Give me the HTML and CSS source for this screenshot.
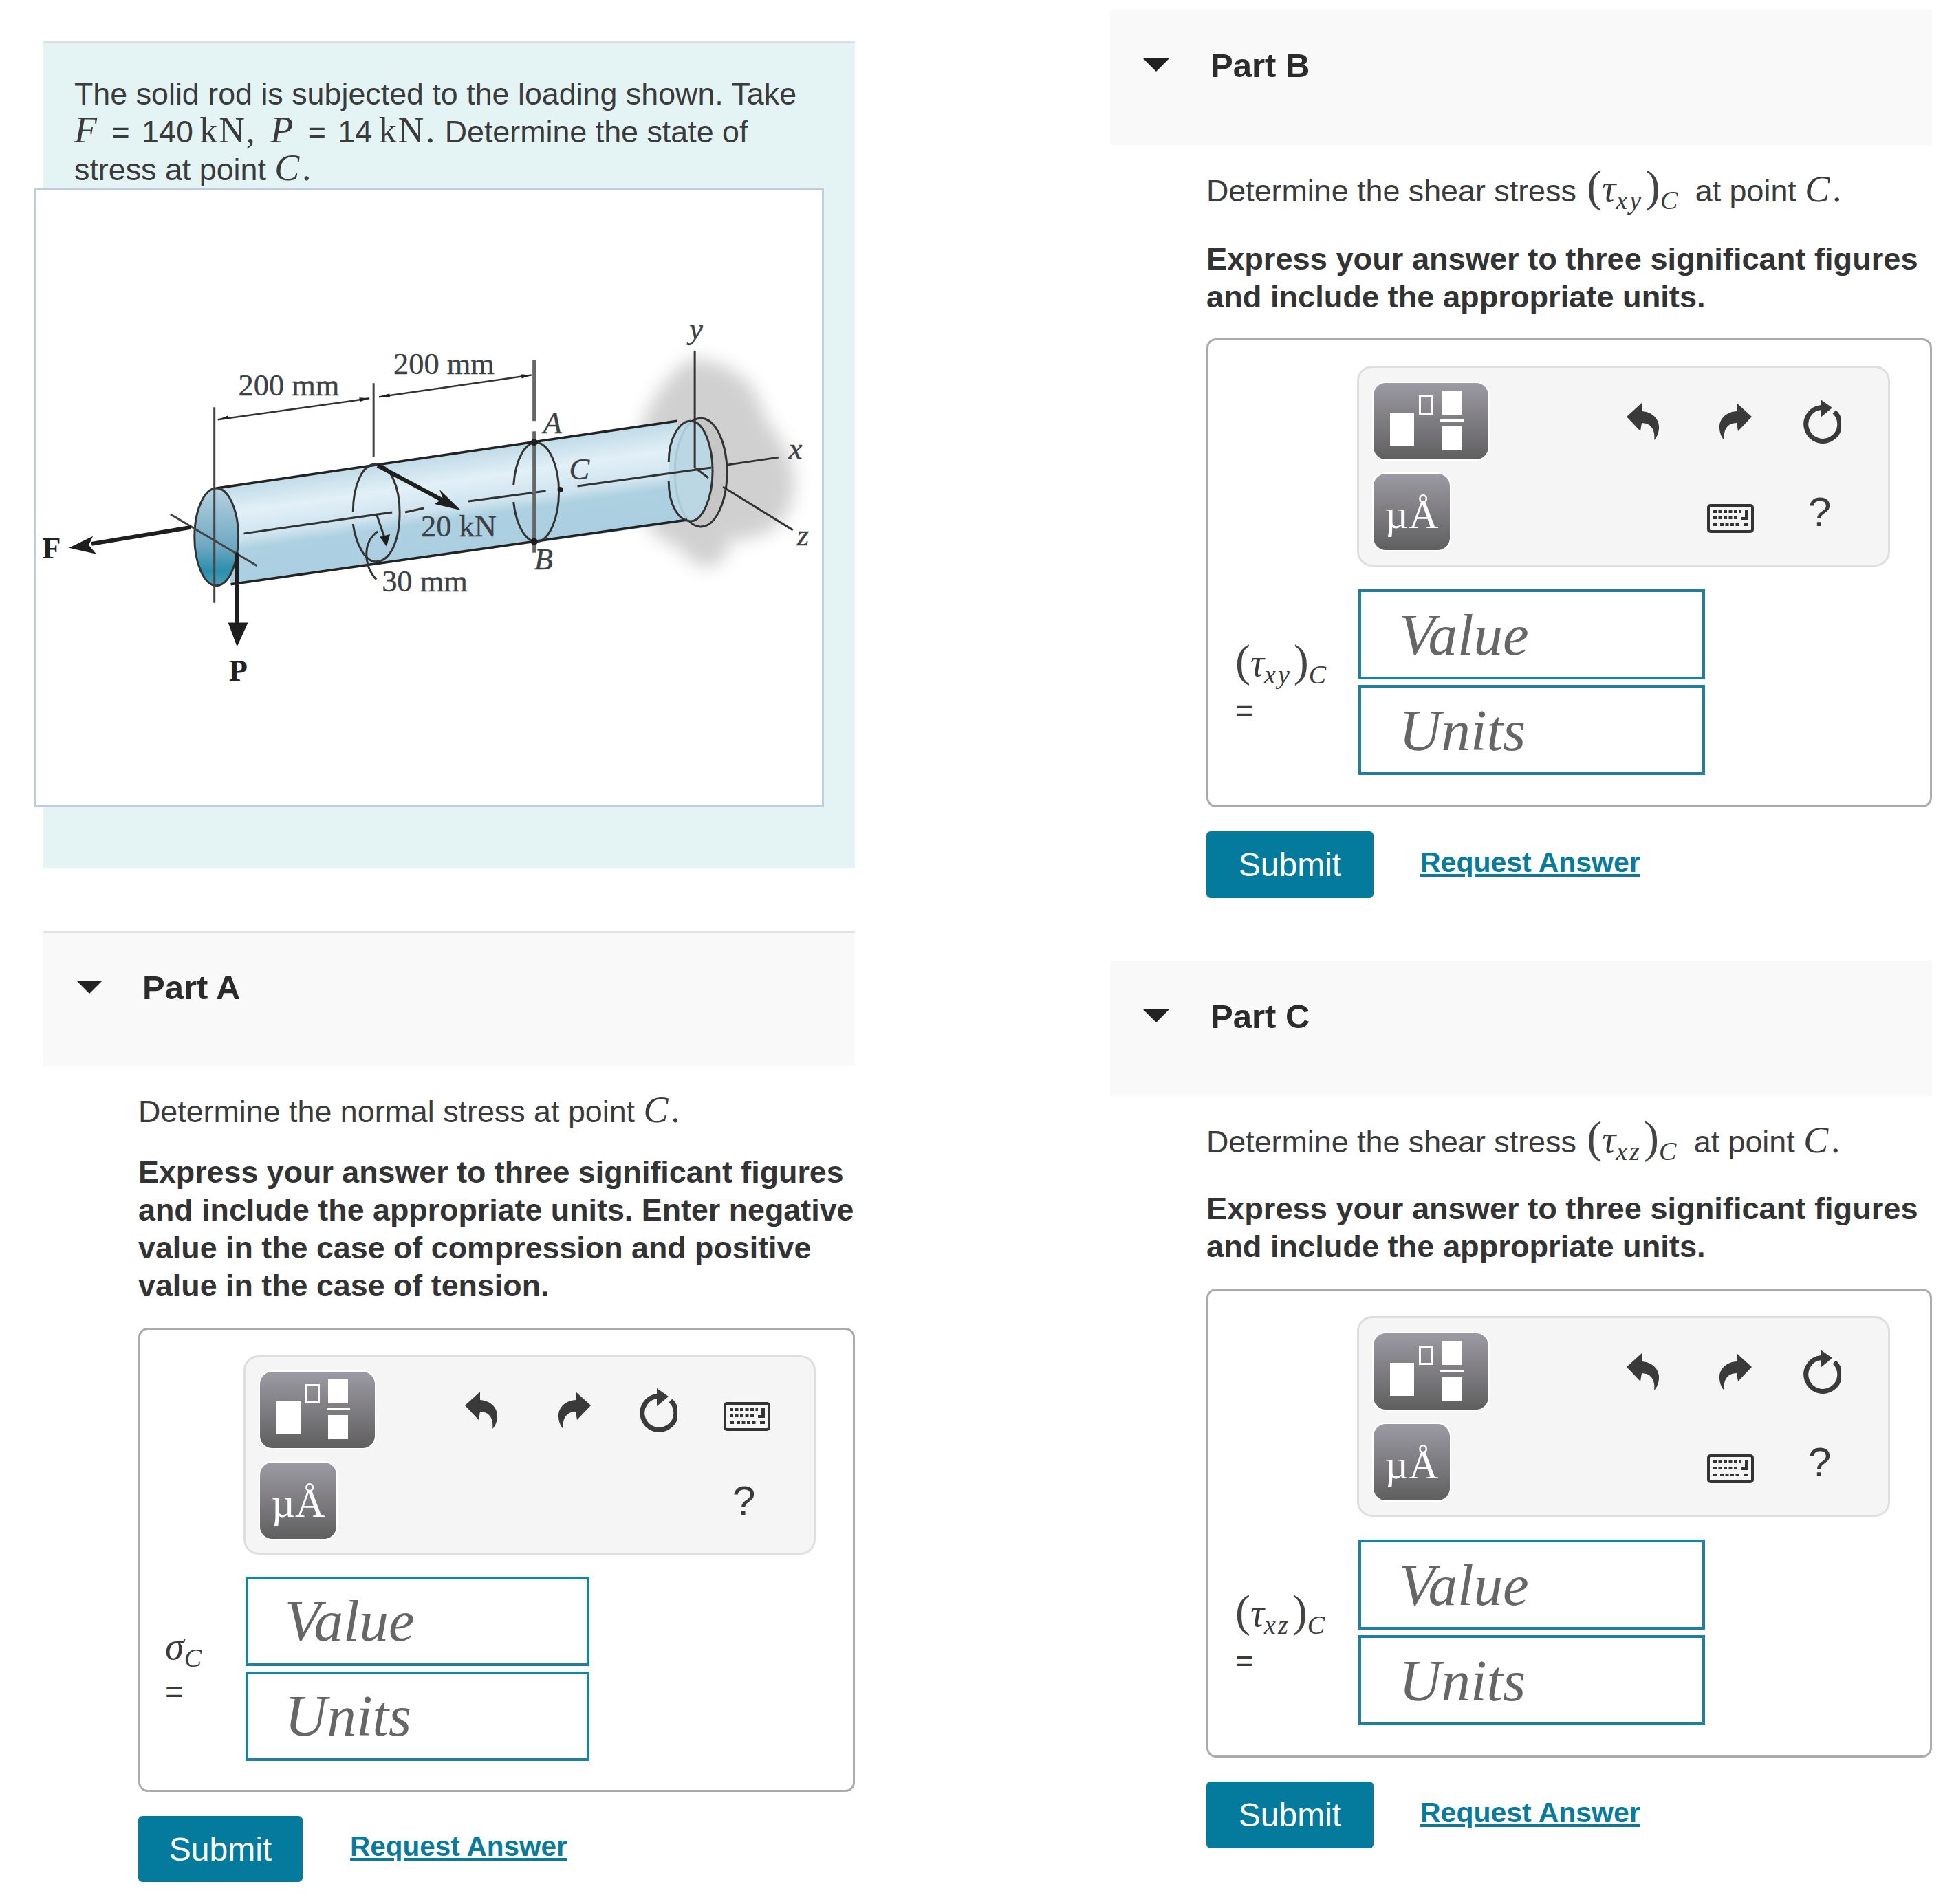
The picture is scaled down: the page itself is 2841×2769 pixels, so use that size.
FILE: index.html
```html
<!DOCTYPE html>
<html lang="en">
<head>
<meta charset="utf-8">
<title>Solid rod problem</title>
<link rel="stylesheet" href="styles.css">
</head>
<body>
<svg class="sprite" aria-hidden="true">
  <symbol id="i-undo" viewBox="0 0 47 54"><path d="M0 20 L22 0 L22 12 C38 13 48 24 47 37 C46.500 44 44 50 40 54 C42 40 36 29 22 29 L20 41 Z"/></symbol>
  <symbol id="i-reset" viewBox="0 0 56 64"><path class="ring" d="M46 18 A24.500 24.500 0 1 1 27 11.500"/><path d="M26 0 L43 12 L26 26 Z"/></symbol>
  <symbol id="i-kbd" viewBox="0 0 68 42">
    <rect class="kb-frame" x="2" y="2" width="64" height="38" rx="3"/>
    <path class="kb-keys" d="M9 11 H50 M9 20 H46 M19 30 H49"/>
    <path class="kb-solid" d="M55 9 H60 V23 H50 V19 H55 Z M9 28 H15 V32 H9 Z M53 28 H60 V32 H53 Z"/>
  </symbol>
  <symbol id="i-tmpl" viewBox="0 0 167 111">
    <rect class="w" x="24" y="43" width="35" height="48"/>
    <rect class="o" x="67.500" y="19.500" width="18" height="25"/>
    <rect class="w" x="99" y="11" width="29" height="35"/>
    <rect class="w" x="97" y="53" width="34" height="3"/>
    <rect class="w" x="99" y="63" width="29" height="35"/>
  </symbol>
</svg>

<main class="page">
  <section class="col col-left">
    <div class="intro">
      <p class="intro-text">The solid rod is subjected to the loading shown. Take <span class="m">F</span> <span class="rel">=</span> 140 <span class="mr kn">kN</span><span class="mr comma">,</span> <span class="m">P</span> <span class="rel">=</span> 14 <span class="mr kn">kN</span><span class="mr stop">.</span> Determine the state of stress at point <span class="m">C</span><span class="mr">.</span></p>
      <figure class="figure">
        <svg class="diagram" viewBox="52 275 1144 897" role="img" aria-label="Solid rod diagram">
          <defs>
            <linearGradient id="rod" gradientUnits="userSpaceOnUse" x1="640" y1="640" x2="665" y2="815">
              <stop offset="0" stop-color="#8fb9cd"/>
              <stop offset=".14" stop-color="#c2dce8"/>
              <stop offset=".35" stop-color="#e2f0f7"/>
              <stop offset=".56" stop-color="#cfe4ee"/>
              <stop offset=".66" stop-color="#aed1e2"/>
              <stop offset="1" stop-color="#a9cee0"/>
            </linearGradient>
            <linearGradient id="face" x1="0" y1="0" x2="0" y2="1">
              <stop offset="0" stop-color="#b5d2e0"/>
              <stop offset=".6" stop-color="#6ea8c2"/>
              <stop offset=".85" stop-color="#2a8eae"/>
              <stop offset="1" stop-color="#4e9cb8"/>
            </linearGradient>
            <filter id="soft" x="-30%" y="-30%" width="160%" height="160%"><feGaussianBlur stdDeviation="13"/></filter>
          </defs>
          <path class="blob" filter="url(#soft)" d="M1010 520 C1062 528 1095 550 1108 590 C1120 630 1156 650 1156 700 C1156 765 1112 785 1060 786 C1062 824 1025 836 1002 812 C985 785 940 790 936 740 C926 690 926 620 946 590 C965 555 990 528 1010 520 Z"/>
          <path class="rod" d="M314 710 L985 612 L1005 758 L335 851 Z"/>
          <ellipse class="rim" cx="1020" cy="687" rx="38" ry="79"/>
          <ellipse class="rod-end" cx="1005" cy="685" rx="32" ry="73"/>
          <path class="rodline" d="M314 710 L985 612 M335 850 L1000 756"/>
          <ellipse class="face" cx="314" cy="781" rx="32" ry="71"/>
          <path class="thin" d="M513 745 C513 705 527 675 546 675 C568 675 581 710 581 745 C581 785 568 817 546 817 C530 817 517 790 513 762"/>
          <path class="thin" d="M747 705 C750 665 765 643 780 643 C800 645 813 680 813 715 C813 755 798 788 780 788 C763 788 750 760 747 730"/>
          <path class="thin" d="M973 672 C973 635 990 612 1005 612 C1025 612 1037 650 1037 685 C1037 725 1022 758 1005 758 C988 758 973 735 973 700"/>
          <path class="axis" d="M354 776 L570 745 M589 745 L616 739 M681 729 L794 714 M840 707 L1035 680 M1058 676 L1133 665 M1011 510 V680 M1011 680 L1031 695 M1052 708 L1154 771"/>
          <path class="axis thin-axis" d="M247 748 L373 823 M311 592 V877 M543 557 V664"/>
          <path class="axis thick" d="M777 523 V612 M777 627 V804"/>
          <path class="dim" d="M316 610 L537 579 M551 577 L773 545"/>
          <path class="tip" d="M316 610 L331 604 L332 609 Z M537 579 L522 578 L523 584 Z M551 577 L566 572 L567 577 Z M773 545 L758 544 L759 550 Z"/>
          <path class="thin" d="M547 747 L562 791 M547 843 C530 825 525 790 549 773"/>
          <path class="tip" d="M562 795 L552 781 L567 777 Z"/>
          <path class="force" d="M277 767 L132 791 M343.500 804 V917 M549 677 L650 731"/>
          <path class="tip" d="M99 797 L134 780 L128 793 L139 806 Z M331 906 H360 L344 941 Z M670 742 L639 712 L644 725 L632 733 Z"/>
          <circle class="tip" cx="777" cy="643" r="5"/>
          <circle class="tip" cx="777" cy="788" r="5"/>
          <circle class="tip" cx="815" cy="712" r="4"/>
          <text class="lbl" x="346" y="575">200 mm</text>
          <text class="lbl" x="572" y="544">200 mm</text>
          <text class="lbl" x="612" y="780">20 kN</text>
          <text class="lbl" x="555" y="860">30 mm</text>
          <text class="lbl b" x="60" y="812">F</text>
          <text class="lbl b" x="332" y="991">P</text>
          <text class="lbl i" x="790" y="630">A</text>
          <text class="lbl i" x="777" y="828">B</text>
          <text class="lbl i" x="828" y="697">C</text>
          <text class="lbl i" x="1003" y="492">y</text>
          <text class="lbl i" x="1148" y="667">x</text>
          <text class="lbl i" x="1160" y="793">z</text>
        </svg>
      </figure>
    </div>

    <article class="part part-a">
      <header class="part-head"><span class="caret"></span><h2 class="part-title">Part A</h2></header>
      <div class="part-body">
        <p class="desc">Determine the normal stress at point <span class="m">C</span><span class="mr">.</span></p>
        <p class="instr">Express your answer to three significant figures and include the appropriate units. Enter negative value in the case of compression and positive value in the case of tension.</p>
        <div class="answer">
          <div class="toolbar">
            <div class="tb-row">
              <button class="tool tool-wide"><svg class="tmpl"><use href="#i-tmpl"/></svg></button>
              <svg class="ic ic-undo a1"><use href="#i-undo"/></svg>
              <svg class="ic ic-redo a2"><use href="#i-undo"/></svg>
              <svg class="ic ic-reset a3"><use href="#i-reset"/></svg>
              <svg class="ic ic-kbd a4"><use href="#i-kbd"/></svg>
            </div>
            <div class="tb-row">
              <button class="tool tool-unit">µÅ</button>
              <span class="help a5">?</span>
            </div>
          </div>
          <div class="entry">
            <div class="label"><span class="m sym">σ</span><sub class="m ssub">C</sub> <span class="eq">=</span></div>
            <div class="fields">
              <div class="field">Value</div>
              <div class="field">Units</div>
            </div>
          </div>
        </div>
        <div class="actions">
          <button class="submit">Submit</button>
          <a class="req" href="#">Request Answer</a>
        </div>
      </div>
    </article>
  </section>

  <section class="col col-right">
    <article class="part part-b">
      <header class="part-head"><span class="caret"></span><h2 class="part-title">Part B</h2></header>
      <div class="part-body">
        <p class="desc">Determine the shear stress <span class="paren">(</span><span class="m sym">τ</span><sub class="m ssub">xy</sub><span class="paren">)</span><sub class="m ssub">C</sub> <span class="after">at point</span> <span class="m">C</span><span class="mr">.</span></p>
        <p class="instr">Express your answer to three significant figures and include the appropriate units.</p>
        <div class="answer">
          <div class="toolbar">
            <div class="tb-row">
              <button class="tool tool-wide"><svg class="tmpl"><use href="#i-tmpl"/></svg></button>
              <svg class="ic ic-undo b1"><use href="#i-undo"/></svg>
              <svg class="ic ic-redo b2"><use href="#i-undo"/></svg>
              <svg class="ic ic-reset b3"><use href="#i-reset"/></svg>
            </div>
            <div class="tb-row">
              <button class="tool tool-unit">µÅ</button>
              <svg class="ic ic-kbd b4"><use href="#i-kbd"/></svg>
              <span class="help b5">?</span>
            </div>
          </div>
          <div class="entry">
            <div class="label"><span class="paren">(</span><span class="m sym">τ</span><sub class="m ssub">xy</sub><span class="paren">)</span><sub class="m ssub">C</sub> <span class="eq">=</span></div>
            <div class="fields">
              <div class="field">Value</div>
              <div class="field">Units</div>
            </div>
          </div>
        </div>
        <div class="actions">
          <button class="submit">Submit</button>
          <a class="req" href="#">Request Answer</a>
        </div>
      </div>
    </article>

    <article class="part part-c">
      <header class="part-head"><span class="caret"></span><h2 class="part-title">Part C</h2></header>
      <div class="part-body">
        <p class="desc">Determine the shear stress <span class="paren">(</span><span class="m sym">τ</span><sub class="m ssub">xz</sub><span class="paren">)</span><sub class="m ssub">C</sub> <span class="after">at point</span> <span class="m">C</span><span class="mr">.</span></p>
        <p class="instr">Express your answer to three significant figures and include the appropriate units.</p>
        <div class="answer">
          <div class="toolbar">
            <div class="tb-row">
              <button class="tool tool-wide"><svg class="tmpl"><use href="#i-tmpl"/></svg></button>
              <svg class="ic ic-undo b1"><use href="#i-undo"/></svg>
              <svg class="ic ic-redo b2"><use href="#i-undo"/></svg>
              <svg class="ic ic-reset b3"><use href="#i-reset"/></svg>
            </div>
            <div class="tb-row">
              <button class="tool tool-unit">µÅ</button>
              <svg class="ic ic-kbd b4"><use href="#i-kbd"/></svg>
              <span class="help b5">?</span>
            </div>
          </div>
          <div class="entry">
            <div class="label"><span class="paren">(</span><span class="m sym">τ</span><sub class="m ssub">xz</sub><span class="paren">)</span><sub class="m ssub">C</sub> <span class="eq">=</span></div>
            <div class="fields">
              <div class="field">Value</div>
              <div class="field">Units</div>
            </div>
          </div>
        </div>
        <div class="actions">
          <button class="submit">Submit</button>
          <a class="req" href="#">Request Answer</a>
        </div>
      </div>
    </article>
  </section>
</main>
</body>
</html>
```
FILE: styles.css
```css
* { box-sizing: border-box; }
html, body { margin: 0; padding: 0; background: #fff; }
body { font-family: "Liberation Sans", Arial, sans-serif; color: #3b3b3b; width: 2841px; height: 2769px; overflow: hidden; }
p, h2, figure { margin: 0; }
.sprite { display: none; }
.page { display: flex; align-items: flex-start; }
.col-left { width: 1180px; margin-left: 63px; padding-top: 60px; }
.col-right { width: 1195px; margin-left: 371px; padding-top: 14px; }

.intro { background: #e4f4f5; border-top: 3px solid #dcdfe1; height: 1203px; padding-top: 46px; }
.intro-text { font-size: 44.800px; line-height: 55px; padding-left: 45px; padding-right: 50px; height: 164px; }
.figure { width: 1148px; height: 901px; margin-left: -13px; background: #fff; border: 3px solid #bccde0; }
.diagram { display: block; width: 100%; height: 100%; }

.m { font-family: "Liberation Serif", serif; font-style: italic; font-size: 54px; line-height: 0; padding-right: 4px; }
.mr { font-family: "Liberation Serif", serif; font-size: 52px; line-height: 0; letter-spacing: 2px; }
.kn { margin-left: -3px; }
.rel { margin: 0 5px; }
.comma { margin-right: 8px; }
.stop { margin-left: 1px; }
.sym { font-size: 56px; padding-right: 0; }
.ssub { font-size: 38px; line-height: 0; vertical-align: -11px; letter-spacing: 3px; padding-right: 0; }
.paren { font-family: "Liberation Serif", serif; font-size: 66px; font-weight: 400; line-height: 0; color: #444; margin-left: 3px; }
.label .paren:first-child { margin-left: 0; }
.after { margin-left: 10px; }

.part { margin-top: 91px; }
.part-b { margin-top: 0; }
.part-head { display: flex; align-items: flex-start; height: 197px; background: #f9f9f9; padding: 53px 0 0 48px; }
.part-a .part-head { border-top: 3px solid #e2e2e2; padding-top: 51px; }
.caret { width: 0; height: 0; margin-top: 18px; border-left: 19px solid transparent; border-right: 19px solid transparent; border-top: 19px solid #222; }
.part-title { margin-left: 60px; font-size: 49px; line-height: 56px; font-weight: 700; color: #2b2b2b; }
.part-a .part-title { margin-left: 58px; }
.part-body { padding-left: 138px; }
.part-b .part-body, .part-c .part-body { padding-left: 140px; }

.desc { font-size: 44.800px; line-height: 55px; padding-top: 38px; }
.part-b .desc, .part-c .desc { padding-top: 33px; line-height: 66px; }
.instr { font-size: 45.200px; line-height: 55px; font-weight: 700; margin-top: 33px; color: #333; }
.part-a .instr { margin-right: -10px; font-size: 44.800px; }
.part-b .instr { margin-top: 39px; }
.part-c .instr { margin-top: 37px; }

.answer { border: 3px solid #ababab; border-radius: 14px; margin-top: 33px; padding-top: 37px; padding-bottom: 44px; }
.part-a .answer { margin-top: 34px; padding-bottom: 42px; }
.part-c .answer { margin-top: 34px; }
.toolbar { background: #f5f5f5; border: 3px solid #dedede; border-radius: 22px; padding: 22px 0 21px 21px; display: flex; flex-direction: column; gap: 21px; }
.part-a .toolbar { width: 832px; height: 290px; margin-left: 150px; padding-top: 21px; }
.part-b .toolbar, .part-c .toolbar { width: 775px; height: 292px; margin-left: 216px; }
.tb-row { display: flex; align-items: center; height: 111px; }

.tool { border: 0; padding: 0; margin: 0; border-radius: 18px; background: linear-gradient(#9c9aa3, #605f5f); box-shadow: 0 0 0 2px #fff; color: #fff; display: block; }
.tool-wide { width: 167px; height: 111px; }
.tool-unit { width: 111px; height: 111px; font-family: "Liberation Serif", serif; font-size: 60px; line-height: 111px; padding-top: 4px; }
.tmpl { display: block; width: 167px; height: 111px; }
#i-tmpl .w { fill: #fff; }
#i-tmpl .o { fill: none; stroke: #fff; stroke-width: 3px; }

.ic { display: block; flex: none; fill: #3a3a3a; }
.ic-undo { width: 47px; height: 54px; }
.ic-redo { width: 47px; height: 54px; transform: scaleX(-1); }
.ic-reset { width: 56px; height: 64px; }
.ic-kbd { width: 68px; height: 42px; margin-top: 18px; }
#i-reset .ring { fill: none; stroke: #3a3a3a; stroke-width: 7px; }
#i-kbd .kb-frame { fill: #f5f5f5; stroke: #333; stroke-width: 4px; }
#i-kbd .kb-keys { fill: none; stroke: #333; stroke-width: 4px; stroke-dasharray: 5 2.500; }
#i-kbd .kb-solid { fill: #333; }
.help { font-size: 60px; line-height: 60px; color: #3a3a3a; flex: none; }

.a1 { margin-left: 131px; }
.a2 { margin-left: 89px; }
.a3 { margin-left: 70px; }
.a4 { margin-left: 67px; }
.a5 { margin-left: 576px; }
.b1 { margin-left: 201px; }
.b2 { margin-left: 88px; }
.b3 { margin-left: 74px; }
.b4 { margin-left: 374px; }
.b5 { margin-left: 79px; }

.entry { display: flex; align-items: center; margin-top: 32px; padding-left: 36px; }
.part-a .label { width: 117px; }
.part-b .label, .part-c .label { width: 179px; padding-top: 13px; }
.part-b .entry, .part-c .entry { margin-top: 33px; padding-left: 39px; }
.label { font-size: 45px; line-height: 55px; }
.eq { display: block; font-size: 45px; line-height: 50px; margin-top: 13px; }
.part-a .eq { margin-top: 10px; }
.fields { display: flex; flex-direction: column; gap: 8px; }
.field { width: 500px; height: 130px; border: 4px solid #1c80a2; padding-left: 53px; font-family: "Liberation Serif", serif; font-style: italic; font-size: 85px; line-height: 120px; color: #666; }
.part-b .field, .part-c .field { width: 504px; height: 131px; padding-left: 55px; line-height: 125px; }

.actions { display: flex; align-items: center; margin-top: 35px; gap: 69px; }
.part-b .actions, .part-c .actions { gap: 68px; }
.submit { width: 239px; height: 96px; border: 0; border-radius: 6px; background: #047a9c; color: #fff; font-family: "Liberation Sans", Arial, sans-serif; font-size: 48px; }
.part-b .submit, .part-c .submit { width: 243px; height: 97px; }
.req { font-size: 40.500px; line-height: 50px; font-weight: 700; color: #0a7a9c; margin-top: -8px; text-decoration: underline; }
.part-b .req, .part-c .req { font-size: 41px; }

.blob { fill: #d0d0d0; }
.rod { fill: url(#rod); }
.rim { fill: #c6c6c6; stroke: #333; stroke-width: 3px; }
.rod-end { fill: #b9d8e6; opacity: .9; }
.rodline { fill: none; stroke: #222; stroke-width: 3.500px; }
.face { fill: url(#face); stroke: #333; stroke-width: 3px; }
.thin { fill: none; stroke: #333; stroke-width: 3px; }
.axis { fill: none; stroke: #333; stroke-width: 3px; }
.thin-axis { stroke: #444; }
.thick { stroke: #666; stroke-width: 5px; }
.dim { fill: none; stroke: #333; stroke-width: 2.500px; }
.tip { fill: #1e1e1e; }
.force { fill: none; stroke: #1e1e1e; stroke-width: 6px; }
.lbl { font-family: "Liberation Serif", serif; font-size: 44.500px; fill: #3c4145; stroke: #3c4145; stroke-width: .4px; }
.lbl.b { font-weight: 700; fill: #222; stroke: none; }
.lbl.i { font-style: italic; }
```
